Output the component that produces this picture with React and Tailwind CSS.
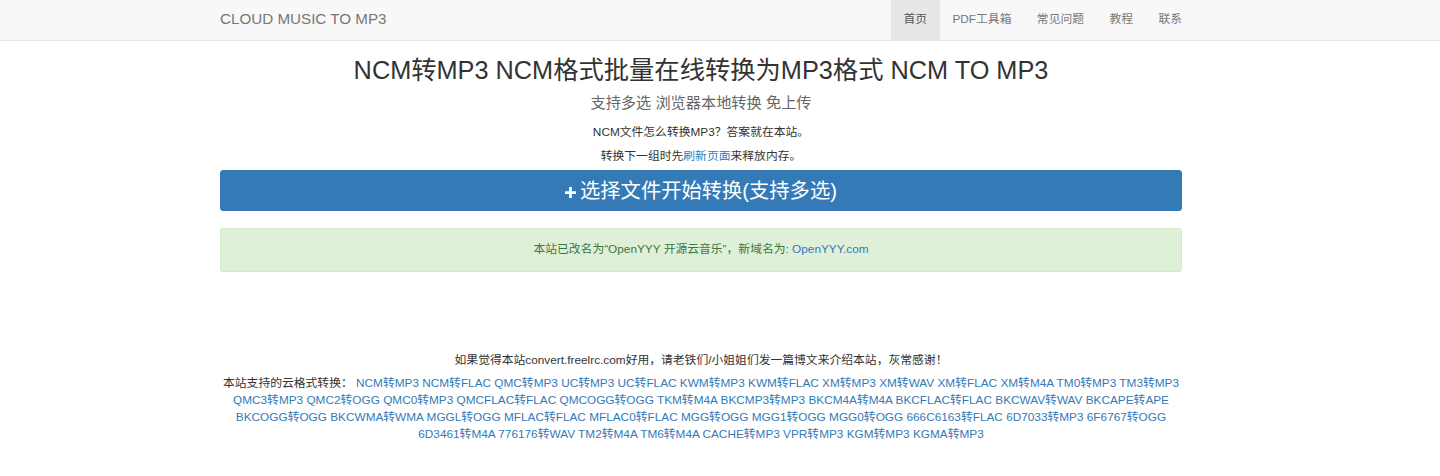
const navItems = ['PDF工具箱', '常见问题', '教程', '联系'];

const formats = [
  ['NCM转MP3', 'NCM转FLAC', 'QMC转MP3', 'UC转MP3', 'UC转FLAC', 'KWM转MP3', 'KWM转FLAC', 'XM转MP3', 'XM转WAV', 'XM转FLAC', 'XM转M4A', 'TM0转MP3', 'TM3转MP3'],
  ['QMC3转MP3', 'QMC2转OGG', 'QMC0转MP3', 'QMCFLAC转FLAC', 'QMCOGG转OGG', 'TKM转M4A', 'BKCMP3转MP3', 'BKCM4A转M4A', 'BKCFLAC转FLAC', 'BKCWAV转WAV', 'BKCAPE转APE'],
  ['BKCOGG转OGG', 'BKCWMA转WMA', 'MGGL转OGG', 'MFLAC转FLAC', 'MFLAC0转FLAC', 'MGG转OGG', 'MGG1转OGG', 'MGG0转OGG', '666C6163转FLAC', '6D7033转MP3', '6F6767转OGG'],
  ['6D3461转M4A', '776176转WAV', 'TM2转M4A', 'TM6转M4A', 'CACHE转MP3', 'VPR转MP3', 'KGM转MP3', 'KGMA转MP3'],
];

export default function App() {
  return (
    <div className="min-h-[476px] bg-white text-[11.8px] text-[#333] font-['Liberation_Sans','Noto_Sans_CJK_SC',sans-serif]">
      {/* Navbar */}
      <nav className="h-[41px] bg-[#f8f8f8] border-b border-[#e7e7e7]">
        <div className="w-[962px] ml-[220px] flex items-center justify-between">
          <a className="text-[15.2px] leading-[38px] h-[40px] text-[#777]">CLOUD MUSIC TO MP3</a>
          <ul className="flex text-[11.8px] text-[#777] -mr-[12.7px]">
            <li className="h-[40px] px-[12.7px] leading-[38px] bg-[#e7e7e7] text-[#555]">首页</li>
            {navItems.map((item) => (
              <li key={item} className="h-[40px] px-[12.7px] leading-[38px]">{item}</li>
            ))}
          </ul>
        </div>
      </nav>

      <main className="w-[962px] ml-[220px] text-center">
        <h1 className="mt-[10px] text-[25.3px] leading-[38px] font-normal">NCM转MP3 NCM格式批量在线转换为MP3格式 NCM TO MP3</h1>
        <h2 className="mt-[3px] text-[15.2px] leading-[22px] font-normal text-[#666]">支持多选 浏览器本地转换 免上传</h2>
        <p className="mt-[10px] leading-[17px]">NCM文件怎么转换MP3？答案就在本站。</p>
        <p className="mt-[7px] leading-[17px]">转换下一组时先<a className="text-[#337ab7]">刷新页面</a>来释放内存。</p>

        <button className="mt-[5px] w-full h-[41px] rounded-[3px] bg-[#337ab7] border border-[#337ab7] text-white text-[20.3px] leading-[28px] flex items-center justify-center">
          <svg viewBox="0 0 12 12" className="w-[11px] h-[11px] mt-[3px] mr-[4px] fill-white">
            <path d="M4.5 0h3v4.5H12v3H7.5V12h-3V7.5H0v-3h4.5z" />
          </svg>
          选择文件开始转换(支持多选)
        </button>

        <div className="mt-[17px] h-[44px] flex items-center justify-center rounded-[3px] bg-[#dff0d8] border border-[#d6e9c6] text-[#3c763d]">
          本站已改名为“OpenYYY 开源云音乐”，新域名为:&nbsp;<a className="text-[#337ab7]">OpenYYY.com</a>
        </div>

        <p className="mt-[80px] leading-[17px]">如果觉得本站convert.freelrc.com好用，请老铁们/小姐姐们发一篇博文来介绍本站，灰常感谢！</p>
        <div className="mt-[6px] leading-[17px]">
          {formats.map((line, i) => (
            <div key={i}>
              {i === 0 && <span>本站支持的云格式转换：&nbsp;</span>}
              {line.map((f, j) => (
                <a key={f} className="text-[#337ab7]">{j > 0 ? ' ' : ''}{f}</a>
              ))}
            </div>
          ))}
        </div>
      </main>
    </div>
  );
}
